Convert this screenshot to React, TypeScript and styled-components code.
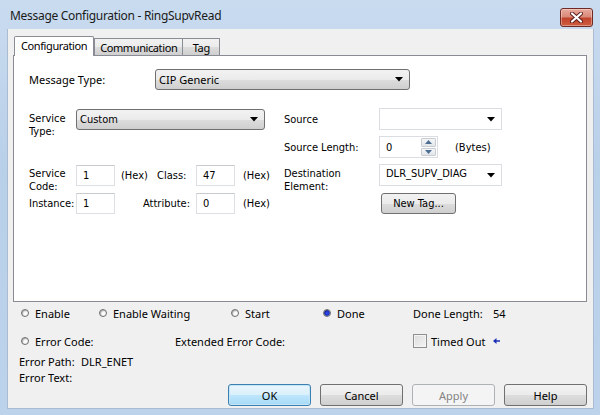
import React from 'react';
import styled, { createGlobalStyle, css } from 'styled-components';

const GlobalStyle = createGlobalStyle`
  html, body {
    margin: 0;
    padding: 0;
    width: 600px;
    height: 415px;
    overflow: hidden;
    background: #bdd3ea;
  }
  * {
    box-sizing: border-box;
  }
`;

const UI_FONT = `'Segoe UI', 'Noto Sans', sans-serif`;
const UI_SIZE = '11px';
const FORM_FONT = `'DejaVu Sans Condensed', 'DejaVu Sans', 'Liberation Sans', sans-serif`;

function DropArrow() {
  return (
    <svg width="8" height="5" viewBox="0 0 8 5">
      <path d="M0 0 H8 L4 4.5 Z" fill="#000" />
    </svg>
  );
}

function BackArrow() {
  return (
    <svg width="7" height="6" viewBox="0 0 7 6">
      <path d="M0 3 L3.5 0 V2.2 H7 V3.8 H3.5 V6 Z" fill="#1b2fb5" />
    </svg>
  );
}

function SpinArrow({ up }: { up?: boolean }) {
  return (
    <svg width="7" height="4" viewBox="0 0 7 4">
      <path d={up ? 'M0 4 L3.5 0 L7 4 Z' : 'M0 0 L7 0 L3.5 4 Z'} fill="#4d6d93" />
    </svg>
  );
}

export default function App() {
  return (
    <>
      <GlobalStyle />
      <Window>
        <TitleBar>
          <Title>Message Configuration - RingSupvRead</Title>
          <CloseButton>
            <svg width="13" height="11" viewBox="0 0 13 11">
              <path
                d="M2 1.5 L11 9.5 M11 1.5 L2 9.5"
                stroke="#5a1a1a"
                strokeWidth="4"
                strokeLinecap="round"
              />
              <path
                d="M2 1.5 L11 9.5 M11 1.5 L2 9.5"
                stroke="#fff"
                strokeWidth="2.2"
                strokeLinecap="round"
              />
            </svg>
          </CloseButton>
        </TitleBar>
        <ClientFrame>
          <Client>
            <TabStrip>
              <Tab $active>Configuration</Tab>
              <Tab>Communication</Tab>
              <Tab $min={38}>Tag</Tab>
            </TabStrip>
            <TabPanel>
              <MessageTypeRow>
                <UiLabel $width={126}>Message Type:</UiLabel>
                <ButtonCombo $width={255}>
                  <span>CIP Generic</span>
                  <DropArrow />
                </ButtonCombo>
              </MessageTypeRow>

              <FormColumns>
                <LeftColumn>
                  <ServiceTypeRow>
                    <StackLabel>
                      Service
                      <br />
                      Type:
                    </StackLabel>
                    <ButtonCombo $width={189} $form>
                      <span>Custom</span>
                      <DropArrow />
                    </ButtonCombo>
                  </ServiceTypeRow>
                  <FieldGrid>
                    <StackLabel>
                      Service
                      <br />
                      Code:
                    </StackLabel>
                    <TextBox>1</TextBox>
                    <FormText $pad={5}>(Hex)</FormText>
                    <FormText $pad={3}>Class:</FormText>
                    <TextBox>47</TextBox>
                    <FormText $pad={7}>(Hex)</FormText>

                    <FormText>Instance:</FormText>
                    <TextBox>1</TextBox>
                    <FormText $span={2} $right>
                      Attribute:
                    </FormText>
                    <TextBox>0</TextBox>
                    <FormText $pad={7}>(Hex)</FormText>
                  </FieldGrid>
                </LeftColumn>

                <RightGrid>
                  <FormText>Source</FormText>
                  <EditCombo>
                    <span />
                    <DropArrow />
                  </EditCombo>

                  <FormText>Source Length:</FormText>
                  <SpinRow>
                    <SpinBox>
                      <span>0</span>
                      <SpinButtons>
                        <SpinButton>
                          <SpinArrow up />
                        </SpinButton>
                        <SpinButton>
                          <SpinArrow />
                        </SpinButton>
                      </SpinButtons>
                    </SpinBox>
                    <FormText>(Bytes)</FormText>
                  </SpinRow>

                  <StackLabel>
                    Destination
                    <br />
                    Element:
                  </StackLabel>
                  <EditCombo>
                    <span>DLR_SUPV_DIAG</span>
                    <DropArrow />
                  </EditCombo>

                  <span />
                  <SmallButton>New Tag...</SmallButton>
                </RightGrid>
              </FormColumns>
            </TabPanel>

            <StatusGrid>
              <RadioItem>
                <Radio />
                Enable
              </RadioItem>
              <RadioItem $span={2}>
                <Radio />
                Enable Waiting
              </RadioItem>
              <RadioItem>
                <Radio />
                Start
              </RadioItem>
              <RadioItem>
                <Radio $checked />
                Done
              </RadioItem>
              <StatusText>Done Length:</StatusText>
              <StatusText>54</StatusText>

              <RadioItem $span={2}>
                <Radio />
                Error Code:
              </RadioItem>
              <StatusText $span={3}>Extended Error Code:</StatusText>
              <RadioItem $gap={4}>
                <CheckBox />
                Timed Out
              </RadioItem>
              <ArrowCell>
                <BackArrow />
              </ArrowCell>
            </StatusGrid>

            <ErrorPathRow>
              <StatusText>Error Path:</StatusText>
              <StatusText>DLR_ENET</StatusText>
            </ErrorPathRow>

            <BottomRow>
              <StatusText>Error Text:</StatusText>
              <ButtonBar>
                <DialogButton $default>OK</DialogButton>
                <DialogButton>Cancel</DialogButton>
                <DialogButton $disabled>Apply</DialogButton>
                <DialogButton>Help</DialogButton>
              </ButtonBar>
            </BottomRow>
          </Client>
        </ClientFrame>
      </Window>
    </>
  );
}

const Window = styled.div`
  width: 600px;
  height: 415px;
  display: flex;
  flex-direction: column;
  background: linear-gradient(180deg, #c9dbef 0%, #b9d0e9 40%, #bcd3eb 100%);
  font-family: ${UI_FONT};
`;

const TitleBar = styled.div`
  height: 29px;
  flex: none;
  display: flex;
  justify-content: space-between;
  align-items: flex-start;
  padding: 8px 7px 0 10px;
`;

const Title = styled.div`
  font-size: 12px;
  line-height: 16px;
  letter-spacing: -0.3px;
  color: #1a1a1a;
`;

const CloseButton = styled.div`
  width: 33px;
  height: 19px;
  border: 1px solid #6f2a24;
  border-radius: 3px;
  background: linear-gradient(180deg, #e9a99c 0%, #d98a79 45%, #c2432c 55%, #cf5d3f 100%);
  box-shadow: inset 0 0 0 1px rgba(255, 255, 255, 0.35);
  display: flex;
  align-items: center;
  justify-content: center;
`;

const ClientFrame = styled.div`
  flex: 1;
  display: flex;
  padding: 0 6px 6px 7px;
`;

const Client = styled.div`
  flex: 1;
  display: flex;
  flex-direction: column;
  background: #f0f0f0;
  border: 1px solid #a9bcd2;
  border-top: none;
  padding: 7px 6px 0 5px;
`;

const TabStrip = styled.div`
  height: 19px;
  display: flex;
  align-items: flex-end;
  padding-left: 1px;
  position: relative;
  z-index: 1;
`;

const Tab = styled.div<{ $active?: boolean; $min?: number }>`
  font-size: ${UI_SIZE};
  letter-spacing: -0.4px;
  color: #000;
  border: 1px solid #898c95;
  border-bottom: none;
  display: flex;
  align-items: center;
  justify-content: center;
  min-width: ${(p) => p.$min ?? 0}px;
  ${(p) =>
    p.$active
      ? css`
          height: 20px;
          margin-bottom: -1px;
          padding: 0 6px 2px 6px;
          background: #fff;
          border-radius: 2px 2px 0 0;
        `
      : css`
          height: 17px;
          margin-left: -1px;
          padding: 0 5px;
          background: linear-gradient(180deg, #f2f2f2 0%, #ebebeb 50%, #dddddd 51%, #cfcfcf 100%);
          &:nth-child(2) {
            margin-left: 0;
          }
        `}
`;

const TabPanel = styled.div`
  height: 247px;
  flex: none;
  background: #fff;
  border: 1px solid #898c95;
  padding: 13px 0 0 15px;
`;

const MessageTypeRow = styled.div`
  display: flex;
  align-items: center;
`;

const UiLabel = styled.div<{ $width: number }>`
  width: ${(p) => p.$width}px;
  font-size: ${UI_SIZE};
  color: #000;
`;

const ButtonCombo = styled.div<{ $width: number; $form?: boolean }>`
  width: ${(p) => p.$width}px;
  height: 21px;
  border: 1px solid #707070;
  border-radius: 3px;
  background: linear-gradient(180deg, #f2f2f2 0%, #ebebeb 50%, #dddddd 51%, #cfcfcf 100%);
  display: flex;
  align-items: center;
  justify-content: space-between;
  padding: 0 6px 0 3px;
  font-family: ${(p) => (p.$form ? FORM_FONT : UI_FONT)};
  font-size: 11px;
  color: #000;
`;

const FormColumns = styled.div`
  display: flex;
  margin-top: 19px;
`;

const LeftColumn = styled.div`
  width: 255px;
  display: flex;
  flex-direction: column;
`;

const ServiceTypeRow = styled.div`
  display: flex;
  align-items: flex-start;
`;

const StackLabel = styled.div`
  width: 47px;
  padding-top: 3px;
  font-family: ${FORM_FONT};
  font-size: 11px;
  line-height: 13px;
  color: #000;
  align-self: start;
  white-space: nowrap;
`;

const FieldGrid = styled.div`
  margin-top: 26px;
  display: grid;
  grid-template-columns: 47px 40px 38px 42px 40px auto;
  grid-template-rows: 22px 22px;
  row-gap: 6px;
  align-items: center;
`;

const FormText = styled.div<{ $pad?: number; $span?: number; $right?: boolean }>`
  font-family: ${FORM_FONT};
  font-size: 11px;
  color: #000;
  white-space: nowrap;
  padding-left: ${(p) => p.$pad ?? 0}px;
  grid-column: ${(p) => (p.$span ? `span ${p.$span}` : 'auto')};
  text-align: ${(p) => (p.$right ? 'right' : 'left')};
  padding-right: ${(p) => (p.$right ? 6 : 0)}px;
`;

const TextBox = styled.div`
  width: 39px;
  height: 21px;
  border: 1px solid #dcdfe3;
  border-top-color: #c7cace;
  background: #fff;
  font-family: ${FORM_FONT};
  font-size: 11px;
  display: flex;
  align-items: center;
  padding-left: 6px;
  color: #000;
`;

const RightGrid = styled.div`
  display: grid;
  grid-template-columns: 95px 160px;
  grid-template-rows: 22px 22px 22px 22px;
  row-gap: 6px;
  align-items: center;
  margin-top: -1px;
`;

const EditCombo = styled.div`
  width: 123px;
  height: 22px;
  border: 1px solid #dadde1;
  background: #fff;
  display: flex;
  align-items: center;
  justify-content: space-between;
  padding: 0 6px 4px 6px;
  font-family: ${FORM_FONT};
  font-size: 11px;
  color: #000;
  svg {
    margin-top: 4px;
  }
`;

const SpinRow = styled.div`
  display: flex;
  align-items: center;
  gap: 17px;
`;

const SpinBox = styled.div`
  width: 59px;
  height: 22px;
  border: 1px solid #dadde1;
  background: #fff;
  display: flex;
  align-items: center;
  justify-content: space-between;
  padding-left: 6px;
  font-family: ${FORM_FONT};
  font-size: 11px;
  color: #000;
`;

const SpinButtons = styled.div`
  width: 16px;
  height: 100%;
  display: flex;
  flex-direction: column;
  padding: 1px 1px 1px 0;
  gap: 1px;
`;

const SpinButton = styled.div`
  flex: 1;
  border: 1px solid #c9cdd2;
  border-radius: 1px;
  background: linear-gradient(180deg, #f5f6f7 0%, #e2e5e9 100%);
  display: flex;
  align-items: center;
  justify-content: center;
`;

const SmallButton = styled.div`
  width: 75px;
  height: 21px;
  margin-left: 2px;
  border: 1px solid #707070;
  border-radius: 3px;
  background: linear-gradient(180deg, #f2f2f2 0%, #ebebeb 50%, #dddddd 51%, #cfcfcf 100%);
  font-family: ${FORM_FONT};
  font-size: 11px;
  color: #000;
  display: flex;
  align-items: center;
  justify-content: center;
`;

const StatusGrid = styled.div`
  display: grid;
  grid-template-columns: 78px 77px 55px 92px 91px 80px auto;
  grid-template-rows: 16px 16px;
  row-gap: 12px;
  align-items: center;
  margin-top: 3px;
  padding-left: 7px;
`;

const StatusText = styled.div<{ $span?: number }>`
  font-size: ${UI_SIZE};
  color: #000;
  white-space: nowrap;
  grid-column: ${(p) => (p.$span ? `span ${p.$span}` : 'auto')};
`;

const RadioItem = styled.div<{ $span?: number; $gap?: number }>`
  display: flex;
  align-items: center;
  gap: ${(p) => p.$gap ?? 6}px;
  font-size: ${UI_SIZE};
  color: #000;
  white-space: nowrap;
  grid-column: ${(p) => (p.$span ? `span ${p.$span}` : 'auto')};
`;

const Radio = styled.span<{ $checked?: boolean }>`
  width: 8px;
  height: 8px;
  margin-left: 1px;
  border-radius: 50%;
  border: 1px solid #6e6e6e;
  box-shadow: inset 1px 1px 1px rgba(0, 0, 0, 0.25);
  background: ${(p) =>
    p.$checked
      ? 'radial-gradient(circle, #3550ee 0%, #1a2fc8 55%, #9aa4d8 75%, #d8d8d8 100%)'
      : 'radial-gradient(circle at 60% 60%, #ffffff 0%, #f4f4f4 50%, #d6d6d6 100%)'};
  flex: none;
`;

const CheckBox = styled.span`
  width: 14px;
  height: 14px;
  border: 1px solid #8e8f8f;
  background: linear-gradient(135deg, #dcdcdc 0%, #f4f4f4 100%);
  box-shadow: inset 0 0 0 1px #f4f4f4;
  flex: none;
`;

const ArrowCell = styled.div`
  display: flex;
  align-items: center;
`;

const ErrorPathRow = styled.div`
  display: grid;
  grid-template-columns: 62px auto;
  align-items: center;
  height: 16px;
  margin-top: 4px;
  padding-left: 6px;
`;

const BottomRow = styled.div`
  display: flex;
  justify-content: space-between;
  align-items: flex-start;
  padding: 1px 0 0 6px;
`;

const ButtonBar = styled.div`
  display: flex;
  gap: 9px;
  margin-top: 14px;
`;

const DialogButton = styled.div<{ $default?: boolean; $disabled?: boolean }>`
  width: 83px;
  height: 22px;
  border-radius: 3px;
  font-size: ${UI_SIZE};
  display: flex;
  align-items: center;
  justify-content: center;
  border: 1px solid #707070;
  color: #000;
  background: linear-gradient(180deg, #f2f2f2 0%, #ebebeb 50%, #dddddd 51%, #cfcfcf 100%);
  ${(p) =>
    p.$default &&
    css`
      border-color: #3c7fb1;
      box-shadow: inset 0 0 0 1px #c4e5f6;
      background: linear-gradient(180deg, #eaf6fd 0%, #d9f0fc 50%, #bee6fd 51%, #a7d9f5 100%);
    `}
  ${(p) =>
    p.$disabled &&
    css`
      border-color: #adb2b5;
      color: #838383;
      background: #f4f4f4;
    `}
`;
